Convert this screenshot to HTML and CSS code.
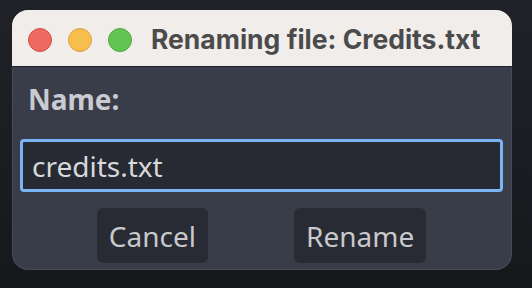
FILE: index.html
```html
<!DOCTYPE html>
<html lang="en">
<head>
    <meta charset="UTF-8">
    <meta name="viewport" content="width=device-width, initial-scale=1.0">
    <title>Rename File</title>
    <link rel="stylesheet" href="styles.css">
</head>
<body>

    <div class="window">
        <div class="titlebar">
            <div class="lights">
                <span class="light red"></span>
                <span class="light yellow"></span>
                <span class="light green"></span>
            </div>
            <div class="title">Renaming file: Credits.txt</div>
        </div>

        <div class="content">
            <label class="label" for="file-name">Name:</label>
            <input class="field" id="file-name" type="text" value="credits.txt">
            <div class="actions">
                <button class="btn">Cancel</button>
                <button class="btn">Rename</button>
            </div>
        </div>
    </div>

</body>
</html>
```

FILE: styles.css
```css
/* Page */
body {
    margin: 0;
    padding: 10px 0 0 12px;
    height: 288px;
    box-sizing: border-box;
    background: linear-gradient(to bottom, #202228, #17181c);
    overflow: hidden;
}

/* Window */
.window {
    width: 500px;
    height: 260px;
    display: flex;
    flex-direction: column;
    background-color: #383d49;
    border-radius: 16px;
    box-shadow: inset 0 0 0 1px rgba(255, 255, 255, 0.08);
    overflow: hidden;
}

.titlebar {
    height: 56px;
    display: flex;
    align-items: center;
    padding-left: 16px;
    background-color: #f0edeb;
    border-bottom: 1px solid #1f2228;
    flex-shrink: 0;
}

.lights {
    display: flex;
    gap: 16px;
    margin-top: 3px;
}

.light {
    width: 24px;
    height: 24px;
    border-radius: 50%;
    box-sizing: border-box;
}

.red { background: #ec6a5f; border: 1px solid #d25549; }
.yellow { background: #f5be4f; border: 1px solid #d9a13a; }
.green { background: #61c554; border: 1px solid #4ca83f; }

.title {
    margin-left: 19px;
    font-family: Inter, "Liberation Sans", sans-serif;
    font-weight: 700;
    font-size: 26.5px;
    color: #4b4b4b;
    margin-top: 1px;
}

/* Dialog content */
.content {
    padding: 13px 9px 7px 8px;
    display: flex;
    flex-direction: column;
    font-family: "Noto Sans", sans-serif;
}

.label {
    margin-left: 8px;
    font-weight: 700;
    font-size: 28px;
    color: #c9cbd0;
}

.field {
    margin-top: 21px;
    height: 53px;
    box-sizing: border-box;
    padding: 0 9px;
    background-color: #272a32;
    border: 3px solid #7ab4f3;
    border-radius: 4px;
    font-family: "Noto Sans", sans-serif;
    font-size: 28px;
    color: #d7d8db;
    outline: none;
}

.actions {
    margin-top: 16px;
    display: flex;
    justify-content: center;
    gap: 86px;
}

.btn {
    height: 55px;
    padding: 0 12px;
    background-color: #282b33;
    border: none;
    border-radius: 6px;
    font-family: "Noto Sans", sans-serif;
    font-size: 28px;
    color: #c8c9cd;
}
```
